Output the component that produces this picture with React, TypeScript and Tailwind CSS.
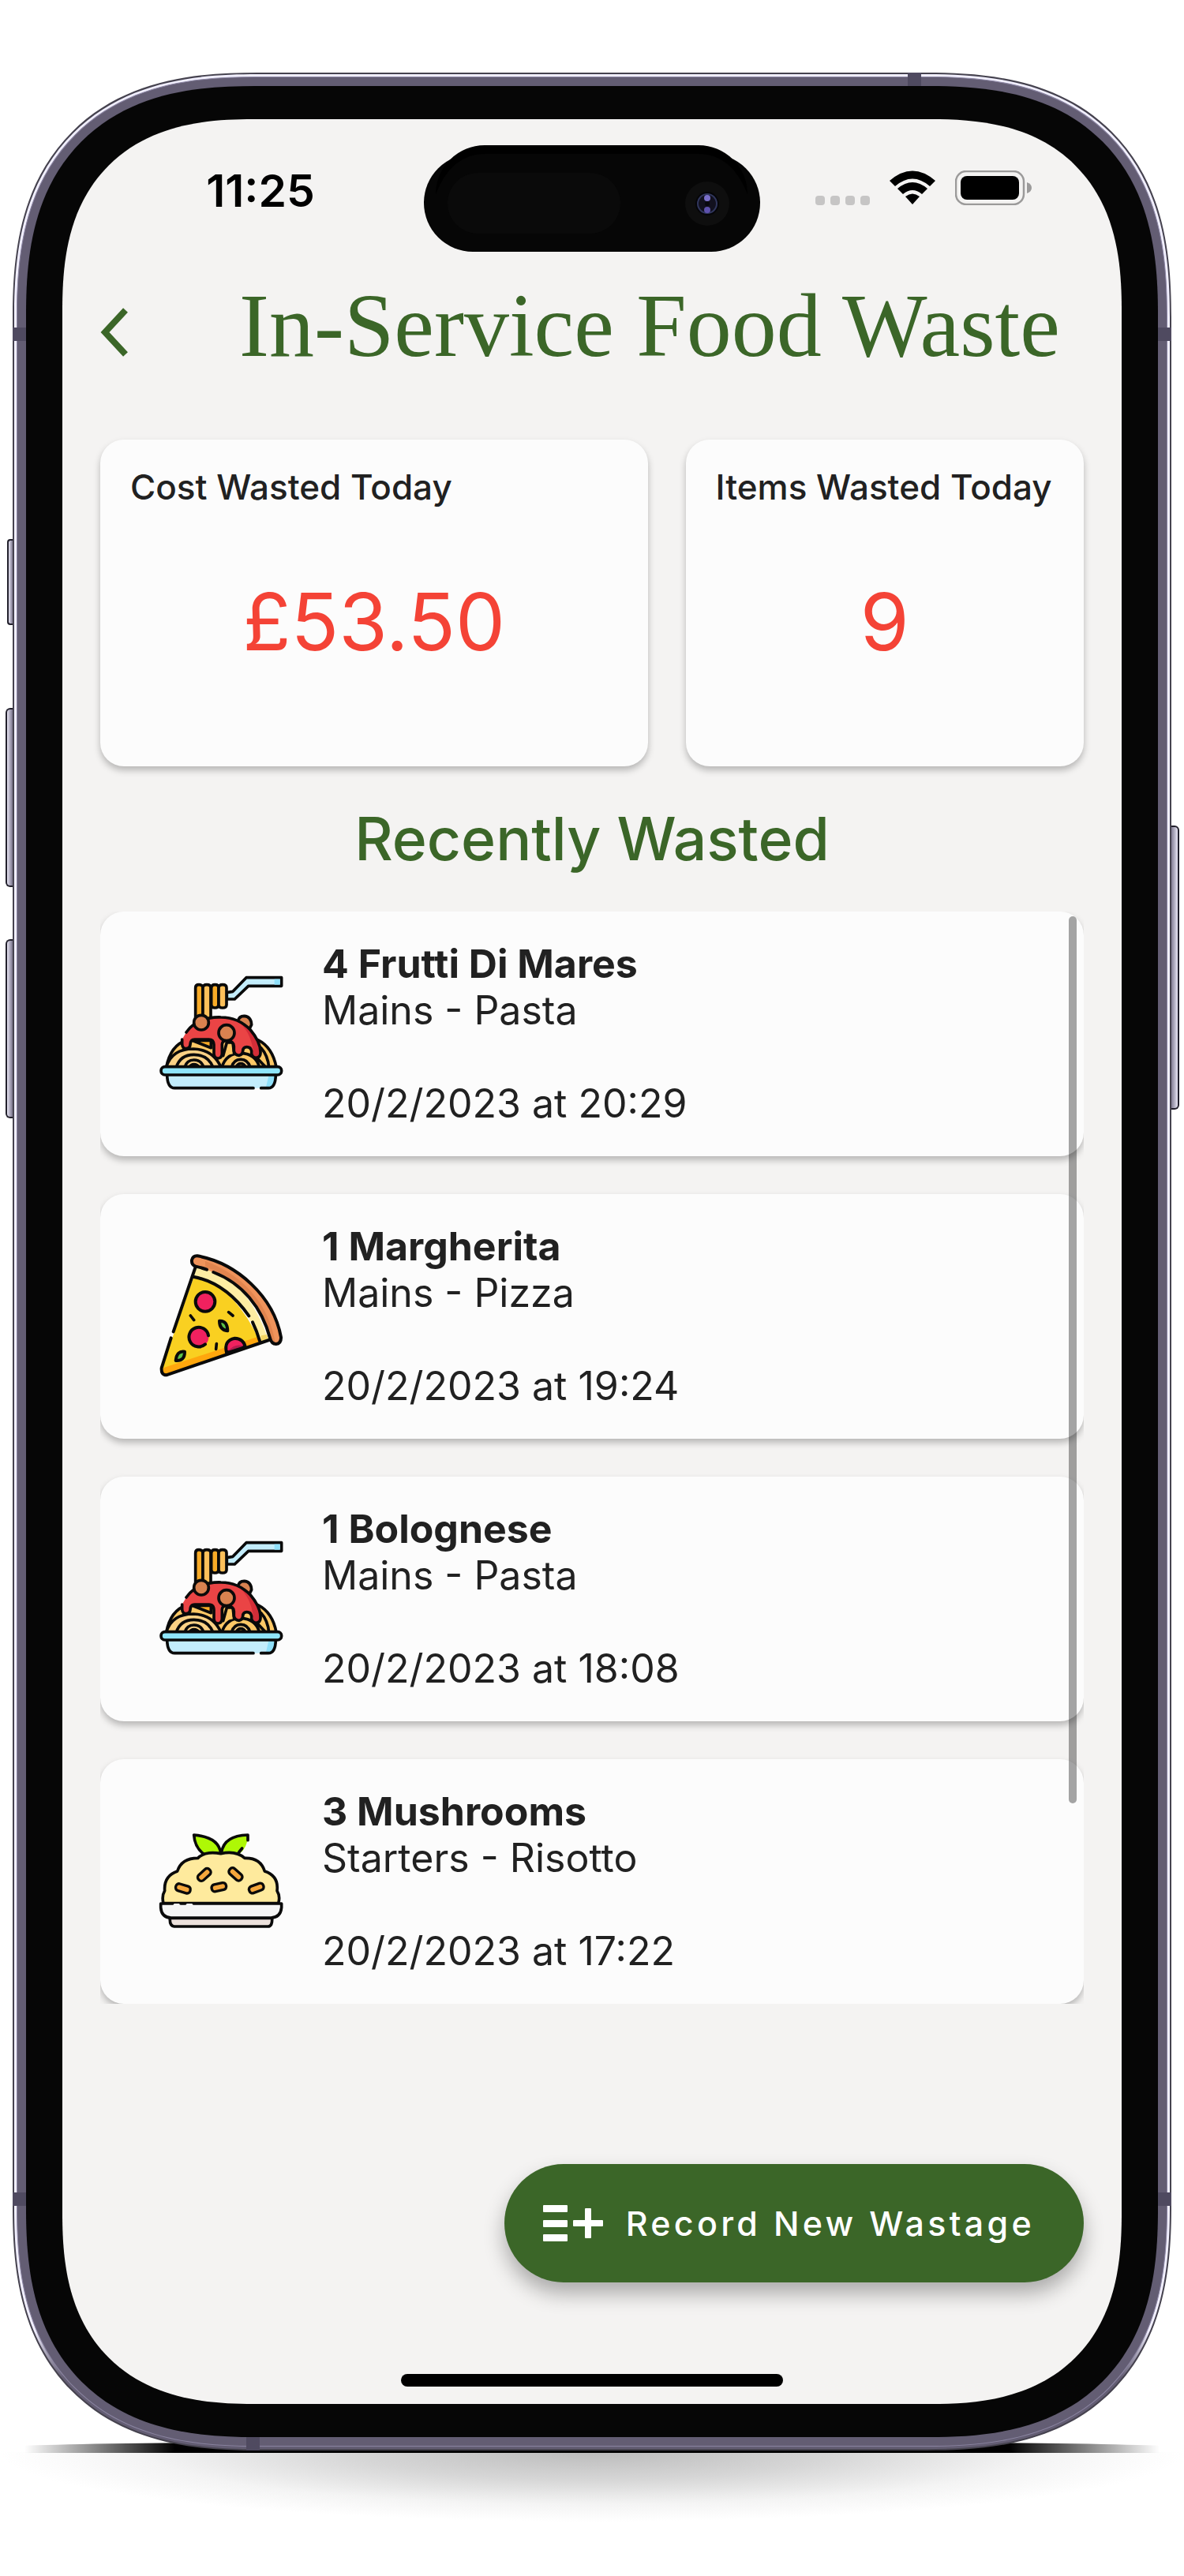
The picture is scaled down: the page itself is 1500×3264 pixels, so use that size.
import { ReactNode } from "react";

interface WasteItem {
  id: number
  title: string
  category: string
  date: string
  icon: ReactNode
}

interface StatInterface {
  label: string
  value: string
}

const PastaIcon = () => (
  <svg viewBox="60 57 480 480" className="size-40 shrink-0" fill="none" stroke="#0a0a0a" strokeWidth="11" strokeLinecap="round" strokeLinejoin="round" aria-hidden="true">
    {/* fork */}
    <path d="M322 140 L345 136 L396 83 H530 V115 H404 L352 165 H322 Z" fill="#c3edfc" />
    <path d="M503 89 H524 V110 H503 Z" fill="#8fe0fa" stroke="none" />
    {/* twirled noodles */}
    <path d="M203 240 V122 Q203 110 216 110 Q230 110 231 122 V240 Z" fill="#f8ab27" />
    <path d="M231 240 V122 Q232 110 246 110 Q261 110 261 122 V240 Z" fill="#fdc05a" />
    <path d="M263 122 Q264 110 277 110 Q291 110 291 122 V187 Q290 198 277 198 Q264 198 263 187 Z" fill="#f8ab27" />
    <path d="M291 122 Q292 110 306 110 Q321 110 321 122 V187 Q320 198 306 198 Q292 198 291 187 Z" fill="#fdc05a" />
    {/* pasta bed */}
    <path d="M92 424 Q108 340 170 320 H440 Q496 348 510 424 Z" fill="#fdc866" />
    <path d="M190 322 H262 V350 Z" fill="#f8ab27" />
    <path d="M92 424 Q112 354 195 354 Q270 356 300 424" fill="#fbd185" />
    <path d="M130 424 Q145 376 197 376 Q250 376 270 424" fill="#fbd185" />
    <path d="M162 424 Q170 396 197 396 Q225 396 234 424" fill="#fbd185" />
    <path d="M180 424 Q186 413 197 413 Q210 413 216 424 Z" fill="#f8ab27" />
    <path d="M303 424 Q320 370 375 370 Q432 372 446 424" fill="#fdc866" />
    <path d="M340 424 Q348 394 375 394 Q402 394 411 424" fill="#fbd185" />
    <path d="M357 424 Q363 410 375 410 Q388 410 393 424 Z" fill="#f8ab27" />
    <path d="M308 380 L322 330 H345 L350 372" fill="#fdc866" />
    <path d="M440 392 L470 424 M452 350 Q478 378 482 424" />
    {/* back meatball */}
    <path d="M364 250 Q368 229 388 229 Q414 230 416 262 L408 278 Z" fill="#d98250" />
    {/* sauce */}
    <path d="M152 318 V336 Q153 353 168 353 Q182 352 183 338 Q184 318 200 318 H254 Q272 318 273 338 V372 Q274 390 289 390 Q303 389 304 372 V336 Q306 322 322 322 Q348 324 349 344 V362 Q352 378 368 379 Q382 377 383 362 Q384 347 398 347 Q413 347 416 362 V372 Q419 387 434 388 Q450 386 450 370 Q452 330 412 282 Q365 234 300 234 Q240 232 196 262 Q182 272 168 291" fill="#ea4445" stroke="none" />
    <path d="M372 256 Q420 300 424 384 Q434 392 446 382 Q458 330 412 282 Q394 262 372 256 Z" fill="#d32d38" stroke="none" />
    <path d="M152 318 V336 Q153 353 168 353 Q182 352 183 338 Q184 318 200 318 H254 Q272 318 273 338 V372 Q274 390 289 390 Q303 389 304 372 V336 Q306 322 322 322 Q348 324 349 344 V362 Q352 378 368 379 Q382 377 383 362 Q384 347 398 347 Q413 347 416 362 V372 Q419 387 434 388 Q450 386 450 370 Q452 330 412 282 Q365 234 300 234 Q240 232 196 262 Q182 272 168 291" />
    <circle cx="225" cy="254" r="28" fill="#d98250" />
    <circle cx="321" cy="293" r="30" fill="#d98250" />
    {/* plate */}
    <path d="M95 453 H508 Q507 503 482 503 H122 Q96 502 95 453 Z" fill="#c3edfc" stroke="none" />
    <path d="M482 453 H508 Q507 503 470 503 Z" fill="#8fe0fa" stroke="none" />
    <path d="M95 453 Q96 503 124 503 H423 M452 503 H480 Q507 503 508 453" />
    <rect x="72" y="422" width="458" height="31" rx="15" fill="#8fe5fb" />
  </svg>
);

const PizzaIcon = () => (
  <svg viewBox="60 81 480 480" className="size-40 shrink-0" fill="none" stroke="#0a0a0a" strokeWidth="12" strokeLinecap="round" strokeLinejoin="round" aria-hidden="true">
    <path d="M196 172 Q350 200 446 414 L92 542 Q70 540 74 520 Z" fill="#f9d021" stroke="none" />
    <path d="M82 516 L436 400 L446 418 L92 544 Q70 538 82 516 Z" fill="#ffa70d" stroke="none" />
    <path d="M202 132 Q400 165 480 412 L446 420 Q380 215 196 170 Z" fill="#fdeda3" stroke="none" />
    <path d="M452 394 L474 390 L480 408 L452 418 Z" fill="#f3d462" stroke="none" />
    {/* crust */}
    <path d="M204 91 C360 110 500 245 528 400 Q529 424 508 426 Q492 426 487 406 C450 262 350 165 204 132 Q188 128 190 106 Q194 91 204 91 Z" fill="#ef935b" stroke="none" />
    <path d="M240 133 C370 180 455 270 492 410 L506 420 C485 290 400 170 240 110 Z" fill="#d57a45" stroke="none" opacity="0.55" />
    <path d="M246 143 Q228 136 204 131 Q187 126 189 107 Q193 90 210 91 C360 118 500 245 528 400 Q529 424 509 426 Q492 426 487 406 C455 285 380 195 271 153" />
    {/* cheese edge */}
    <path d="M198 171 C280 187 350 240 406 319" />
    <path d="M420 343 Q436 376 447 414" />
    {/* sides */}
    <path d="M202 136 L119 379 M110 403 L74 517 Q72 544 92 544 L482 411" />
    {/* pepperoni */}
    <circle cx="240" cy="265" r="37" fill="#f0215f" />
    <circle cx="216" cy="400" r="37" fill="#f0215f" stroke="none" />
    <path d="M252 394 A37 37 0 1 0 240 427" />
    <path d="M321 459 Q310 412 352 404 Q386 406 392 436 Z" fill="#f0215f" />
    <path d="M327 452 Q355 422 384 434 Z" fill="#b61b50" stroke="none" />
    {/* leaves */}
    <path d="M294 338 Q324 336 325 376 Q294 372 294 338 Z" fill="#5ec247" />
    <path d="M162 455 Q132 450 128 489 Q162 492 162 455 Z" fill="#5ec247" />
    <path d="M184 318 L197 335 M329 305 L345 318 M283 425 L281 445" strokeWidth="11" />
  </svg>
);

const RisottoIcon = () => (
  <svg viewBox="60 39 480 480" className="size-40 shrink-0" fill="none" stroke="#0a0a0a" strokeWidth="11" strokeLinecap="round" strokeLinejoin="round" aria-hidden="true">
    {/* leaves */}
    <path d="M299 172 Q292 110 197 102 Q200 150 236 176 Z" fill="#aef806" />
    <path d="M302 172 Q312 104 402 102 Q402 150 368 176 Z" fill="#aef806" stroke="none" />
    <path d="M302 168 Q312 104 402 102 V122 M380 153 L368 168" />
    {/* rice mound */}
    <path d="M81 362 Q74 335 86 314 Q82 258 134 240 Q150 190 212 190 Q240 162 299 173 Q356 160 390 190 Q450 188 466 240 Q520 258 513 314 Q526 335 518 362 Z" fill="#feea9d" />
    {/* mushrooms */}
    <g fill="#f5a73c" strokeWidth="10">
      <rect x="208" y="240" width="56" height="27" rx="12" transform="rotate(-42 236 253)" />
      <rect x="326" y="238" width="58" height="27" rx="12" transform="rotate(42 355 252)" />
      <rect x="127" y="292" width="57" height="27" rx="12" transform="rotate(17 155 306)" />
      <rect x="264" y="287" width="56" height="27" rx="12" transform="rotate(-12 292 300)" />
      <rect x="406" y="291" width="57" height="27" rx="12" transform="rotate(-20 434 305)" />
    </g>
    {/* bowl */}
    <path d="M106 418 H494 Q496 450 478 450 H122 Q104 448 106 418 Z" fill="#ece1dc" />
    <path d="M71 363 V378 Q74 416 110 417 H490 Q526 416 530 378 V363 Z" fill="#f5f5f5" stroke="none" />
    <path d="M116 363 H71 V378 Q74 416 110 417 H490 Q526 416 530 378 V363 H196 M147 363 H164" />
  </svg>
);

const stats: StatInterface[] = [
  { label: "Cost Wasted Today", value: "£53.50" },
  { label: "Items Wasted Today", value: "9" },
];

const items: WasteItem[] = [
  { id: 1, title: "4 Frutti Di Mares", category: "Mains - Pasta", date: "20/2/2023 at 20:29", icon: <PastaIcon /> },
  { id: 2, title: "1 Margherita", category: "Mains - Pizza", date: "20/2/2023 at 19:24", icon: <PizzaIcon /> },
  { id: 3, title: "1 Bolognese", category: "Mains - Pasta", date: "20/2/2023 at 18:08", icon: <PastaIcon /> },
  { id: 4, title: "3 Mushrooms", category: "Starters - Risotto", date: "20/2/2023 at 17:22", icon: <RisottoIcon /> },
];

const DynamicIsland = () => (
  <svg width="426" height="135" viewBox="0 0 426 135" aria-hidden="true">
    <rect x="0" y="11" width="426" height="124" rx="62" fill="#060606" />
    <path d="M15 62 A62 62 0 0 1 77 0 H348 A62 62 0 0 1 410 62 Q390 11 348 11 H77 Q35 11 15 62 Z" fill="#000" />
    <rect x="30" y="35" width="219" height="77" rx="38" fill="#0a0a0a" />
    <circle cx="359" cy="74" r="28" fill="#0e0e0e" />
    <circle cx="359" cy="74" r="15" fill="#050508" />
    <circle cx="359" cy="74" r="12" fill="#12111f" stroke="#30365c" strokeWidth="2" />
    <circle cx="359" cy="67" r="4" fill="#7a6fc9" />
    <circle cx="359" cy="82" r="4" fill="#5d51ad" />
    <circle cx="359" cy="74" r="3" fill="#08080f" />
  </svg>
);

const StatusBar = () => (
  <div className="grid grid-cols-[1fr_auto_1fr] items-center">
    <div className="pb-5 pl-11 text-center text-[57px] leading-[60px] font-semibold text-black">11:25</div>
    <DynamicIsland />
    <div className="flex items-end justify-center pr-11 pb-7">
      <div className="mr-6 flex gap-[7px]">
        <span className="size-3 rounded-sm bg-[#c6c5c5]" />
        <span className="size-3 rounded-sm bg-[#c6c5c5]" />
        <span className="size-3 rounded-sm bg-[#c6c5c5]" />
        <span className="size-3 rounded-sm bg-[#c6c5c5]" />
      </div>
      <svg width="60" height="44" viewBox="0 0 60 44" className="mr-6" aria-hidden="true">
        <path d="M1 13 Q30 -12 59 13 L52 20 Q30 1 8 20 Z" />
        <path d="M11 23 Q30 7 49 23 L42 30 Q30 20 18 30 Z" />
        <path d="M21 33 Q30 26 39 33 L30 43 Z" />
      </svg>
      <svg width="97" height="44" viewBox="0 0 97 44" aria-hidden="true">
        <rect x="1" y="1" width="86" height="42" rx="13" fill="none" stroke="#9b9a9a" strokeWidth="2.5" />
        <rect x="7" y="7" width="74" height="30" rx="8" />
        <path d="M91 15 Q97 17 97 22 Q97 27 91 29 Z" fill="#9b9a9a" />
      </svg>
    </div>
  </div>
);

const App = () => {
  return (
    <div className="overflow-hidden bg-white px-4 pt-[92px] pb-[156px] font-[Inter,sans-serif] text-[#212121]">
      <div className="relative">

        {/* floor shadow */}
        <div className="absolute -inset-x-4 -bottom-[90px] h-[88px] bg-[radial-gradient(ellipse_50%_100%_at_50%_0%,#bcbcbc_0%,#d6d6d6_40%,#f4f4f4_75%,#fff_100%)]" />
        <div className="absolute inset-x-0 -bottom-[3px] h-[15px] rounded-t-[50%] bg-[linear-gradient(to_right,transparent_1%,#000_14%,#000_86%,transparent_99%)]" />

        {/* side buttons */}
        <div className="absolute top-[591px] -left-[7px] h-[109px] w-2 rounded-l-sm border-2 border-r-0 border-[#22202c] bg-linear-to-r from-[#e9e7f5] to-[#6b657d]" />
        <div className="absolute top-[805px] -left-[9px] h-[227px] w-[10px] rounded-l-md border-2 border-r-0 border-[#22202c] bg-linear-to-r from-[#e9e7f5] to-[#6b657d]" />
        <div className="absolute top-[1098px] -left-[9px] h-[227px] w-[10px] rounded-l-md border-2 border-r-0 border-[#22202c] bg-linear-to-r from-[#e9e7f5] to-[#6b657d]" />
        <div className="absolute top-[954px] -right-[10px] h-[360px] w-3 rounded-r-md border-2 border-l-0 border-[#22202c] bg-linear-to-l from-[#e9e7f5] to-[#6b657d]" />

        {/* metal frame, bezel, screen */}
        <div className="relative rounded-[250px] bg-[#46434f] p-[2px] supports-[corner-shape:squircle]:rounded-[310px] supports-[corner-shape:squircle]:[corner-shape:superellipse(1.32)]">
          <div className="rounded-[248px] bg-linear-to-b from-[#f1efff] from-95% to-[#635d73] to-97% p-[3px] supports-[corner-shape:squircle]:rounded-[308px] supports-[corner-shape:squircle]:[corner-shape:superellipse(1.32)]">
            <div className="rounded-[245px] border border-[#8a84a0] bg-[#635d73] p-[11px] supports-[corner-shape:squircle]:rounded-[304px] supports-[corner-shape:squircle]:[corner-shape:superellipse(1.32)]">
              <div className="rounded-[233px] bg-[#060606] px-[46px] py-[42px] supports-[corner-shape:squircle]:rounded-[290px] supports-[corner-shape:squircle]:[corner-shape:superellipse(1.32)]">
                <div className="rounded-[190px] bg-[#f4f3f2] pt-[33px] pb-[22px] supports-[corner-shape:squircle]:rounded-[242px] supports-[corner-shape:squircle]:[corner-shape:superellipse(1.32)]">
                  <StatusBar />

                  <main className="flex flex-col px-12">
                    <header className="mt-[26px] flex items-center gap-[140px]">
                      <button type="button" aria-label="Back" className="pt-4">
                        <svg width="36" height="62" viewBox="0 0 36 62" fill="none" stroke="#3b6628" strokeWidth="8" aria-hidden="true">
                          <path d="M32 3 L6 31 L32 59" />
                        </svg>
                      </button>
                      <h1 className="font-['Liberation_Serif',serif] text-[114px] leading-[136px] whitespace-nowrap text-[#3b6628]">In-Service Food Waste</h1>
                    </header>

                    <section className="mt-[76px] grid grid-cols-[11fr_8fr] gap-12">
                      {stats.map((stat) => (
                        <div key={stat.label} className="flex h-[414px] flex-col rounded-[30px] bg-[#fcfcfc] px-[38px] pt-8 pb-10 shadow-[0_5px_8px_rgba(0,0,0,0.25)]">
                          <h3 className="text-[44px] leading-[56px] font-medium whitespace-nowrap">{stat.label}</h3>
                          <p className="flex flex-1 items-center justify-center text-[100px] leading-none text-[#f44336]">{stat.value}</p>
                        </div>
                      ))}
                    </section>

                    <h2 className="my-[44px] text-center text-[75px] leading-[96px] font-medium text-[#3b6628]">Recently Wasted</h2>

                    <div className="relative">
                      <ul className="flex flex-col gap-12 overflow-hidden">
                        {items.map((item) => (
                          <li key={item.id} className="flex items-center gap-12 rounded-[30px] bg-[#fcfcfc] py-[37px] pl-[73px] shadow-[0_5px_8px_rgba(0,0,0,0.25)]">
                            {item.icon}
                            <div className="text-[50px] leading-[59px]">
                              <h4 className="font-bold">{item.title}</h4>
                              <p>{item.category}</p>
                              <p className="pt-[59px]">{item.date}</p>
                            </div>
                          </li>
                        ))}
                      </ul>
                      {/* scroll thumb */}
                      <div className="absolute top-1.5 right-[9px] h-[1124px] w-[10px] rounded-full bg-black/35" />
                    </div>

                    <button type="button" className="mt-[203px] flex h-[150px] items-center gap-7 self-end rounded-full bg-[#3b6628] pr-[62px] pl-12 text-[43px] font-medium tracking-widest whitespace-nowrap text-white shadow-[0_14px_26px_rgba(0,0,0,0.3)]">
                      <svg width="78" height="48" viewBox="0 0 78 48" fill="#fff" aria-hidden="true">
                        <rect x="1" y="1" width="31" height="9" rx="1" />
                        <rect x="1" y="20" width="31" height="9" rx="1" />
                        <rect x="1" y="38" width="31" height="9" rx="1" />
                        <rect x="39" y="20" width="38" height="8" rx="1" />
                        <rect x="54" y="5" width="8" height="38" rx="1" />
                      </svg>
                      Record New Wastage
                    </button>
                  </main>

                  {/* home indicator */}
                  <div className="mx-auto mt-[116px] h-4 w-[36%] rounded-full bg-black" />
                </div>
              </div>
            </div>
          </div>

          {/* antenna bands */}
          <div className="absolute top-[323px] left-0 h-[17px] w-[17px] bg-[#4f4a60]" />
          <div className="absolute top-[323px] right-0 h-[17px] w-[17px] bg-[#4f4a60]" />
          <div className="absolute bottom-[310px] left-0 h-[17px] w-[17px] bg-[#4f4a60]" />
          <div className="absolute right-0 bottom-[310px] h-[17px] w-[17px] bg-[#4f4a60]" />
          <div className="absolute top-0 right-[317px] h-[17px] w-[17px] bg-[#4f4a60]" />
          <div className="absolute bottom-0 left-[296px] h-[17px] w-[17px] bg-[#4f4a60]" />
        </div>
      </div>
    </div>
  );
}

export default App;
